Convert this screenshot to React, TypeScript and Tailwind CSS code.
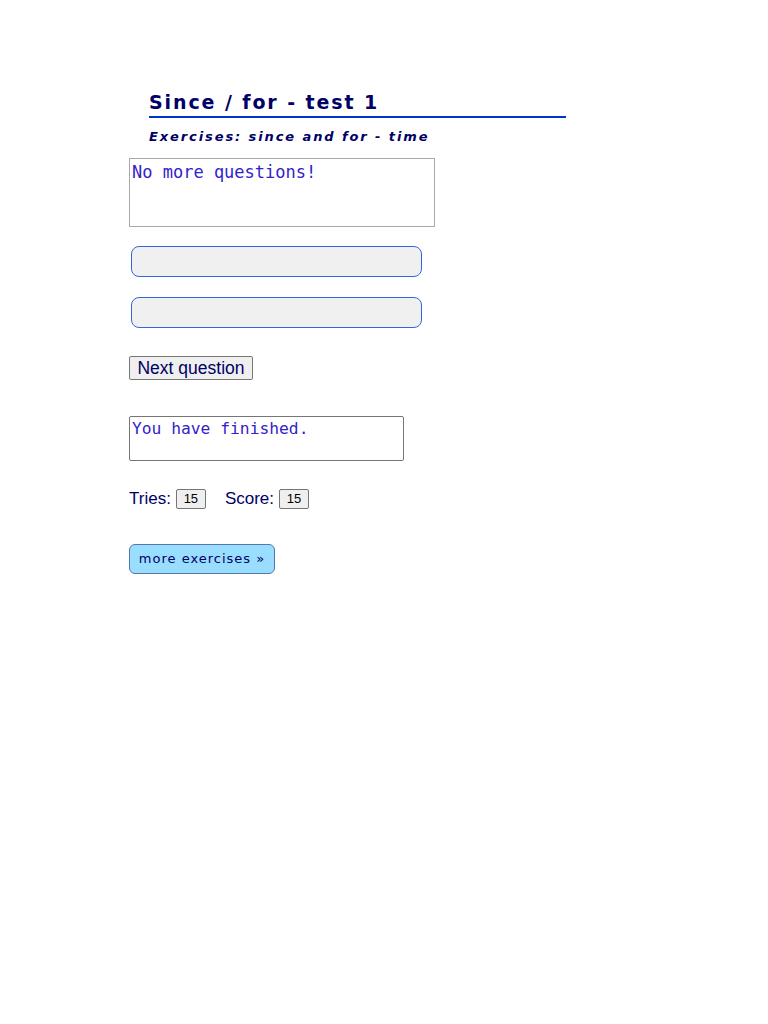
export default function App() {
  return (
    <div className="min-h-screen bg-white pl-[129px] pt-[91px]" style={{ fontFamily: '"Liberation Sans", Arial, sans-serif' }}>
      <div className="ml-[20px] w-[417px] border-b-2 border-[#0033cc] pb-[3px]">
        <h1
          className="text-[19px] font-bold leading-[22px] tracking-[1.9px] text-[#000066]"
          style={{ fontFamily: '"DejaVu Sans", Verdana, sans-serif' }}
        >
          Since / for - test 1
        </h1>
      </div>
      <p
        className="ml-[20px] mt-[11px] text-[13px] font-bold italic leading-[16px] tracking-[1.9px] text-[#000066]"
        style={{ fontFamily: '"DejaVu Sans", Verdana, sans-serif' }}
      >
        Exercises: since and for - time
      </p>

      <div
        className="mt-[13px] h-[69px] w-[306px] border border-[#a9a9a9] px-[2px] pt-[1px] text-[17px] leading-[24px] text-[#3322cc]"
        style={{ fontFamily: '"DejaVu Sans Mono", monospace' }}
      >
        No more questions!
      </div>

      <button type="button" className="ml-[2px] mt-[19px] block h-[31px] w-[291px] rounded-[8px] border border-[#3366dd] bg-[#f0f0f0]" />
      <button type="button" className="ml-[2px] mt-[20px] block h-[31px] w-[291px] rounded-[8px] border border-[#3366dd] bg-[#f0f0f0]" />

      <button
        type="button"
        className="mt-[28px] block h-[24px] w-[124px] rounded-[2px] border border-[#767676] bg-[#efefef] text-[17.5px] leading-[20px] text-[#000066]"
      >
        Next question
      </button>

      <div
        className="mt-[36px] h-[45px] w-[275px] rounded-[2px] border border-[#767676] px-[2px] pt-[1px] text-[16.3px] leading-[22px] text-[#3322cc]"
        style={{ fontFamily: '"DejaVu Sans Mono", monospace' }}
      >
        You have finished.
      </div>

      <div className="mt-[28px] flex h-[20px] items-center text-[17px] text-[#000066]">
        <span>Tries:</span>
        <span className="ml-[5px] flex h-[20px] w-[30px] items-center justify-center rounded-[2px] border border-[#767676] bg-[#efefef] text-[13px] text-black">
          15
        </span>
        <span className="ml-[19px]">Score:</span>
        <span className="ml-[5px] flex h-[20px] w-[30px] items-center justify-center rounded-[2px] border border-[#767676] bg-[#efefef] text-[13px] text-black">
          15
        </span>
      </div>

      <button
        type="button"
        className="mt-[35px] block h-[30px] w-[146px] rounded-[6px] border border-[#5577aa] bg-[#99ddff] text-[13px] tracking-[1px] text-[#000066]"
        style={{ fontFamily: '"DejaVu Sans", Verdana, sans-serif' }}
      >
        more exercises »
      </button>
    </div>
  );
}
